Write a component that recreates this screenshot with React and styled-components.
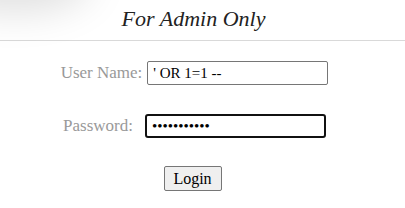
import React, { useEffect, useRef } from "react";
import styled, { createGlobalStyle } from "styled-components";

const GlobalStyle = createGlobalStyle`
  body {
    margin: 0;
    background: #fff;
    font-family: "Liberation Serif", "DejaVu Serif", serif;
    overflow: hidden;
  }
`;

const Page = styled.div`
  position: relative;
  width: 405px;
  height: 208px;
  overflow: hidden;
`;

const Glow = styled.div`
  position: absolute;
  left: -50px;
  top: -40px;
  width: 130px;
  height: 40px;
  border-radius: 50%;
  box-shadow: 0 0 40px 12px rgba(0, 0, 0, 0.13);
`;

const Header = styled.header`
  height: 40px;
  border-bottom: 1px solid #d9d9d9;
  display: flex;
  justify-content: center;
  align-items: center;
  padding-right: 18px;
`;

const Title = styled.h2`
  margin: 0 0 2px 0;
  font-size: 22px;
  font-style: italic;
  font-weight: normal;
  color: #222;
`;

const Form = styled.form`
  display: flex;
  flex-direction: column;
  align-items: center;
  padding-top: 20px;
  padding-right: 16px;
`;

const Row = styled.div`
  display: flex;
  align-items: center;
  justify-content: center;
  height: 24px;
  margin-bottom: ${(p) => p.$gap}px;
`;

const Label = styled.label`
  font-size: 17px;
  color: #999;
  margin-right: ${(p) => p.$space}px;
`;

const Input = styled.input`
  box-sizing: border-box;
  width: 181px;
  height: 24px;
  padding: 0 5px;
  font-family: "Liberation Serif", serif;
  font-size: 15px;
  color: #000;
  border: ${(p) => (p.$focused ? "2px solid #111" : "1px solid #767676")};
  border-radius: ${(p) => (p.$focused ? "3px" : "2px")};
  outline: none;
  background: #fff;
`;

const Button = styled.button`
  box-sizing: border-box;
  width: 58px;
  height: 25px;
  margin-right: 4px;
  font-family: "Liberation Serif", serif;
  font-size: 16px;
  color: #000;
  background: #efefef;
  border: 1px solid #767676;
  border-radius: 2px;
  padding: 0;
`;

export default function App() {
  const pwRef = useRef(null);

  useEffect(() => {
    const el = pwRef.current;
    if (el) {
      el.focus();
      el.setSelectionRange(el.value.length, el.value.length);
    }
  }, []);

  return (
    <Page>
      <GlobalStyle />
      <Glow />
      <Header>
        <Title>For Admin Only</Title>
      </Header>
      <Form onSubmit={(e) => e.preventDefault()}>
        <Row $gap={29}>
          <Label $space={5}>User Name:</Label>
          <Input type="text" defaultValue="' OR 1=1 --" />
        </Row>
        <Row $gap={28}>
          <Label $space={12}>Password:</Label>
          <Input
            ref={pwRef}
            type="password"
            defaultValue="abcdefghijk"
            $focused
          />
        </Row>
        <Button type="submit">Login</Button>
      </Form>
    </Page>
  );
}
